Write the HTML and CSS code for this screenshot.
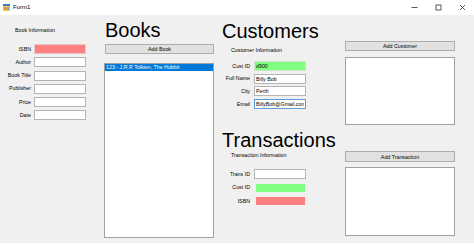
FILE: index.html
```html
<!DOCTYPE html>
<html lang="en">
<head>
<meta charset="utf-8">
<title>Form1</title>
<link rel="stylesheet" href="styles.css">
</head>
<body>
<div class="window">
  <header class="titlebar">
    <svg class="app-icon" width="7" height="7" viewBox="0 0 7 7">
      <rect x="0" y="0" width="7" height="7" fill="#f2c94c"/>
      <rect x="0" y="0" width="7" height="2" fill="#3a78c9"/>
      <rect x="1" y="3" width="2" height="3" fill="#e08a2c"/>
      <rect x="4" y="3" width="2" height="3" fill="#6aa3e0"/>
    </svg>
    <span class="title">Form1</span>
    <div class="controls">
      <span class="ctl"><svg width="7" height="7" viewBox="0 0 7 7"><line x1="0.5" y1="3.5" x2="6.5" y2="3.5" stroke="#333" stroke-width="0.8"/></svg></span>
      <span class="ctl"><svg width="7" height="7" viewBox="0 0 7 7"><rect x="1" y="1" width="5" height="5" fill="none" stroke="#333" stroke-width="0.8"/></svg></span>
      <span class="ctl"><svg width="7" height="7" viewBox="0 0 7 7"><path d="M1 1 L6 6 M6 1 L1 6" stroke="#333" stroke-width="0.8"/></svg></span>
    </div>
  </header>

  <main class="form">
    <section class="col col-info">
      <div class="caption caption-book">Book Information</div>
      <div class="fields fields-book">
        <label class="lbl">ISBN</label><input class="box red" value="">
        <label class="lbl">Author</label><input class="box" value="">
        <label class="lbl">Book Title</label><input class="box" value="">
        <label class="lbl">Publisher</label><input class="box" value="">
        <label class="lbl">Price</label><input class="box" value="">
        <label class="lbl">Date</label><input class="box" value="">
      </div>
    </section>

    <section class="col col-books">
      <h1 class="heading">Books</h1>
      <button class="btn btn-book">Add Book</button>
      <div class="listbox list-books">
        <div class="item selected">123 - J.R.R Tolkien, The Hobbit</div>
      </div>
    </section>

    <section class="col col-cust">
      <h1 class="heading">Customers</h1>
      <div class="caption caption-sub">Customer Information</div>
      <div class="fields fields-cust">
        <label class="lbl">Cust ID</label><input class="box green" value="d900">
        <label class="lbl">Full Name</label><input class="box" value="Billy Bob">
        <label class="lbl">City</label><input class="box" value="Perth">
        <label class="lbl">Email</label><input class="box focused" value="BillyBob@Gmail.con">
      </div>
      <h1 class="heading heading-trans">Transactions</h1>
      <div class="caption caption-sub caption-trans">Transaction Information</div>
      <div class="fields fields-trans">
        <label class="lbl">Trans ID</label><input class="box" value="">
        <label class="lbl">Cust ID</label><span class="swatch green"></span>
        <label class="lbl">ISBN</label><span class="swatch red"></span>
      </div>
    </section>

    <section class="col col-right">
      <button class="btn btn-cust">Add Customer</button>
      <div class="listbox list-cust"></div>
      <button class="btn btn-trans">Add Transaction</button>
      <div class="listbox list-trans"></div>
    </section>
  </main>
</div>
</body>
</html>
```

FILE: styles.css
```css
* { box-sizing: border-box; }

html, body {
  margin: 0;
  padding: 0;
  background: #ffffff;
}

body {
  width: 474px;
  height: 245px;
  overflow: hidden;
  font-family: "Liberation Sans", Arial, sans-serif;
  color: #000;
}

.titlebar {
  height: 15px;
  display: flex;
  align-items: center;
  background: #ffffff;
}

.app-icon {
  margin-left: 3px;
  display: block;
}

.title {
  margin-left: 3px;
  font-size: 6px;
  line-height: 7px;
}

.controls {
  margin-left: auto;
  display: flex;
  height: 15px;
}

.ctl {
  width: 24px;
  height: 15px;
  display: flex;
  align-items: center;
  justify-content: center;
}

.ctl svg { display: block; }

.form {
  height: 228px;
  background: #f0f0f0;
  display: flex;
  align-items: flex-start;
}

.col {
  display: flex;
  flex-direction: column;
}

.col-info { width: 104px; }
.col-books { width: 110px; }
.col-cust { width: 123px; margin-left: 8px; }
.col-right { width: 110px; }

.caption {
  font-size: 5.3px;
  line-height: 7px;
  white-space: nowrap;
}

.caption-book {
  margin-top: 12px;
  padding-left: 15px;
}

.caption-sub {
  margin-top: 6px;
  padding-left: 9px;
}

.caption-trans { margin-top: 2px; }

.fields {
  display: grid;
  align-items: center;
  font-size: 5.3px;
}

.fields-book {
  margin-top: 10px;
  grid-template-columns: 31px 52px;
  column-gap: 3px;
  row-gap: 3.3px;
  grid-auto-rows: 10px;
}

.fields-cust {
  margin-top: 7px;
  grid-template-columns: 28px 52px;
  column-gap: 4px;
  row-gap: 2.7px;
  grid-auto-rows: 10px;
}

.fields-trans {
  margin-top: 10px;
  grid-template-columns: 28px 52px;
  column-gap: 4px;
  row-gap: 3.5px;
  grid-auto-rows: 10px;
}

.lbl {
  text-align: right;
  white-space: nowrap;
  line-height: 7px;
}

.box {
  display: block;
  width: 52px;
  height: 10px;
  margin: 0;
  padding: 0 1px;
  border: 1px solid #b4b4b4;
  background: #ffffff;
  font-family: "Liberation Sans", Arial, sans-serif;
  font-size: 5.3px;
  color: #000;
  outline: none;
}

.box.red { background: #ff8080; border-color: #e6c8c8; }
.box.green { background: #80ff80; border-color: #c8e6c8; }
.box.focused { border-color: #5a9ad8; }

.swatch {
  display: block;
  width: 49px;
  height: 8px;
  margin-left: 2px;
}

.swatch.green { background: #80ff80; }
.swatch.red { background: #ff8080; }

.heading {
  margin: 5px 0 0 0;
  font-size: 20px;
  font-weight: normal;
  line-height: 20px;
  white-space: nowrap;
}

.col-books .heading { padding-left: 1px; }
.col-cust .heading { margin-top: 6px; }
.col-cust .heading-trans { margin-top: 21px; }

.btn {
  display: block;
  height: 10px;
  margin: 0;
  padding: 0;
  border: 1px solid #adadad;
  background: #e1e1e1;
  font-family: "Liberation Sans", Arial, sans-serif;
  font-size: 5.3px;
  line-height: 8px;
  color: #000;
  text-align: center;
}

.btn-book {
  width: 109px;
  margin-left: 1px;
  margin-top: 4px;
}

.btn-cust { width: 110px; margin-top: 26px; }
.btn-trans { width: 110px; height: 11px; margin-top: 26px; }

.listbox {
  background: #ffffff;
  border: 1px solid #a0a0a0;
  width: 110px;
  padding: 0;
}

.list-books { margin-top: 9px; height: 175px; }
.list-cust { margin-top: 6px; height: 68px; }
.list-trans { margin-top: 5px; height: 69px; }

.item {
  height: 7px;
  font-size: 5.3px;
  line-height: 7px;
  padding-left: 1px;
  white-space: nowrap;
}

.item.selected {
  background: #0078d7;
  color: #ffffff;
}
```
